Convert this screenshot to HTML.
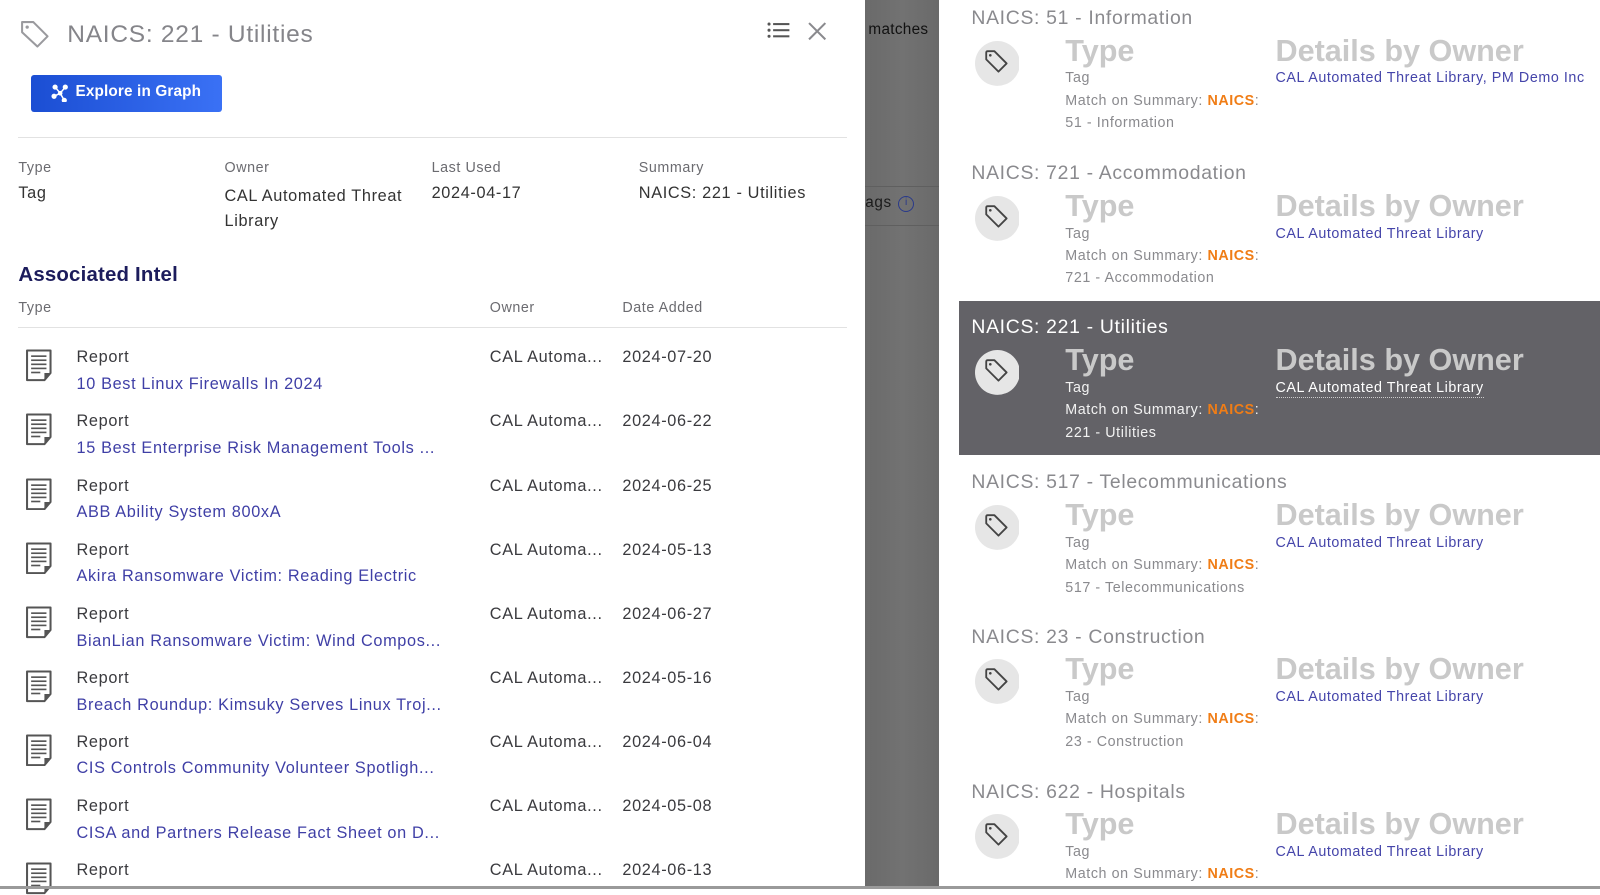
<!DOCTYPE html>
<html><head><meta charset="utf-8"><style>
*{margin:0;padding:0;box-sizing:border-box}
body{width:1600px;height:888px;overflow:hidden;background:#fff;font-family:"Liberation Sans",sans-serif;position:relative}
.a{position:absolute;white-space:nowrap;line-height:1.2}
.or{color:#f07d16;font-weight:bold}
</style></head><body>
<div id="root"></div>
<script>
var S=1.0204,out="";
function p(v){return (v*S).toFixed(1)+"px";}
function box(x,y,w,h,st){out+='<div class="a" style="left:'+p(x)+';top:'+p(y)+';width:'+p(w)+';height:'+p(h)+';'+(st||'')+'"></div>';}
function tx(x,y,fs,col,t,st,ls){out+='<div class="a" style="left:'+p(x)+';top:'+p(y)+';font-size:'+p(fs)+';color:'+col+';letter-spacing:'+((ls==null?0.04:ls)*fs*S).toFixed(2)+'px;'+(st||'')+'">'+t+'</div>';}
function svg(x,y,w,h,vb,inner){out+='<svg class="a" style="left:'+p(x)+';top:'+p(y)+'" width="'+p(w)+'" height="'+p(h)+'" viewBox="'+vb+'">'+inner+'</svg>';}
svg(19,19,32,30,"0 0 32 30",'<path d="M3 3h11l14 14-10 10L3 13z" fill="none" stroke="#9a9a9e" stroke-width="2" stroke-linejoin="round"/><circle cx="8" cy="8" r="1.6" fill="#9a9a9e"/>');
tx(66,20,24,"#85858a","NAICS: 221 - Utilities","",0.03);
svg(752,21,22,18,"0 0 22 18",'<g fill="#555"><circle cx="2" cy="3" r="1.5"/><circle cx="2" cy="9" r="1.5"/><circle cx="2" cy="15" r="1.5"/><rect x="6" y="2" width="16" height="2"/><rect x="6" y="8" width="16" height="2"/><rect x="6" y="14" width="16" height="2"/></g>');
svg(791,21,20,20,"0 0 20 20",'<path d="M2 2L18 18M18 2L2 18" stroke="#8a8a8e" stroke-width="2"/>');
box(30,73,188,37,"border-radius:3px;background:linear-gradient(90deg,#1b4ed3,#3a71f5)");
svg(50,82,18,18,"0 0 18 18",'<g fill="#fff" stroke="#fff" stroke-width="1.5"><line x1="9" y1="9" x2="4" y2="3"/><line x1="9" y1="9" x2="14" y2="3"/><line x1="9" y1="9" x2="3" y2="12"/><line x1="9" y1="9" x2="13" y2="16"/><circle cx="4" cy="3" r="1.8"/><circle cx="14" cy="3" r="1.8"/><circle cx="3" cy="12" r="1.8"/><circle cx="13" cy="16" r="1.8"/><circle cx="9" cy="9" r="1.5"/></g>');
tx(74,81,15,"#fff","Explore in Graph","font-weight:bold",0.01);
box(18,134,812,1,"background:#e2e2e2");
var L="#6b6b70",V="#333";
tx(18,157,14,L,"Type");tx(220,157,14,L,"Owner");tx(423,157,14,L,"Last Used");tx(626,157,14,L,"Summary");
tx(18,180,16,V,"Tag");tx(220,180,16,V,"CAL Automated Threat<br>Library","line-height:1.55");tx(423,180,16,V,"2024-04-17");tx(626,180,16,V,"NAICS: 221 - Utilities");
tx(18,258,20,"#1c1c5c","Associated Intel","font-weight:bold",0.01);
tx(18,294,14,L,"Type");tx(480,294,14,L,"Owner");tx(610,294,14,L,"Date Added");
box(18,320,812,1,"background:#e2e2e2");
var rows=[["10 Best Linux Firewalls In 2024","2024-07-20"],["15 Best Enterprise Risk Management Tools ...","2024-06-22"],["ABB Ability System 800xA","2024-06-25"],["Akira Ransomware Victim: Reading Electric","2024-05-13"],["BianLian Ransomware Victim: Wind Compos...","2024-06-27"],["Breach Roundup: Kimsuky Serves Linux Troj...","2024-05-16"],["CIS Controls Community Volunteer Spotligh...","2024-06-04"],["CISA and Partners Release Fact Sheet on D...","2024-05-08"],["","2024-06-13"]];
var ys=[341,404,467,530,593,656,718,781,844];
var ic='<path d="M2 1.5h23v22l-6 7H2z" fill="#fff" stroke="#555" stroke-width="2" stroke-linejoin="round"/><path d="M19 30.5v-7h6z" fill="#555"/><g stroke="#555" stroke-width="1.6"><line x1="6" y1="7" x2="21" y2="7"/><line x1="6" y1="11" x2="21" y2="11"/><line x1="6" y1="15" x2="21" y2="15"/><line x1="6" y1="19" x2="21" y2="19"/><line x1="6" y1="23" x2="15" y2="23"/></g>';
rows.forEach(function(r,i){var y=ys[i];svg(24,y+1,28,32,"0 0 28 32",ic);tx(75,y,16,"#3a3a3e","Report");tx(480,y,16,"#3a3a3e","CAL Automa...");tx(610,y,16,"#3a3a3e",r[1]);if(r[0])tx(75,y+26,16,"#3f3fa6",r[0]);});
box(848,0,72,870,"background:linear-gradient(90deg,#6a6a6a,#727272 50%,#6a6a6a)");
tx(851,21,15,"#111","matches","",0.02);
box(848,182,72,40,"border-top:1px solid #5f5f5f;border-bottom:1px solid #5f5f5f");
tx(848,190,15,"#1a1a1a","ags");
box(880,192,16,16,"border:1.5px solid #2a3a8a;border-radius:50%");
tx(880,193,10,"#2a3a8a","i","width:"+p(16)+";text-align:center",0);
box(920,0,680,870,"background:#fff");
box(940,295,660,151,"background:#636267");
var R=[["51 - Information","CAL Automated Threat Library, PM Demo Inc"],["721 - Accommodation","CAL Automated Threat Library"],["221 - Utilities","CAL Automated Threat Library"],["517 - Telecommunications","CAL Automated Threat Library"],["23 - Construction","CAL Automated Threat Library"],["622 - Hospitals","CAL Automated Threat Library"]];
var t0=[7,159,310,462,613,765];
var tag='<circle cx="22" cy="22" r="22" fill="#e6e6e6"/><path d="M11 11.5Q11 10 12.5 10L19 10L31 22L23 30L11 18Z" fill="none" stroke="#444" stroke-width="1.8" stroke-linejoin="round"/><circle cx="15" cy="14" r="1.3" fill="#444"/>';
R.forEach(function(r,i){var y=t0[i],hl=i==2;var tc=hl?"#fff":"#8a8a8e";var sc=hl?"#f2f2f2":"#8a8a8e";
tx(952,y,19,tc,"NAICS: "+r[0],"",0.035);
svg(955,y+33,44,44,"0 0 44 44",tag);
tx(1044,y+25,30,"#c9c9c9","Type","font-weight:bold",0.0);
tx(1250,y+25,30,"#c9c9c9","Details by Owner","font-weight:bold",0.0);
tx(1044,y+62,14,sc,"Tag");
if(y+84<850)tx(1044,y+84,14,sc,'Match on Summary: <span class="or">NAICS</span>:');
if(y+106<850)tx(1044,y+106,14,sc,r[0]);
tx(1250,y+62,14,hl?"#fff":"#4545aa",r[1],hl?"border-bottom:1px dotted #ccc":"");});
box(0,868,1600,3,"background:#9a9a9a");
document.getElementById("root").outerHTML=out;
</script>
</body></html>
